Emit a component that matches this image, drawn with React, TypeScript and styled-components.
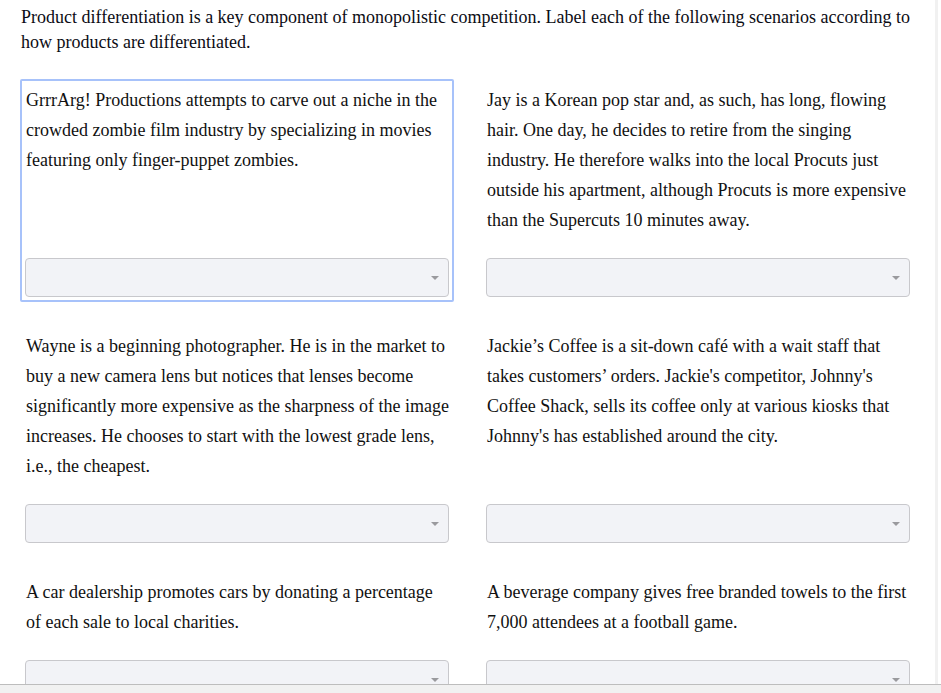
import React from "react";
import styled, { createGlobalStyle } from "styled-components";

const Global = createGlobalStyle`
  html, body { margin: 0; padding: 0; overflow: hidden; background: #fff; }
  body { font-family: "Liberation Serif", "Times New Roman", serif; color: #111; }
`;

const Page = styled.div`
  width: 938px;
  min-height: 693px;
  box-sizing: border-box;
  padding: 5px 22px 40px 20px;
  border-right: 3px solid #f1f1f1;
`;

const Prompt = styled.p`
  margin: 0 0 24px 1px;
  font-size: 18px;
  line-height: 25px;
  color: #0c0c14;
`;

const Grid = styled.div`
  display: grid;
  grid-template-columns: 434px 434px;
  column-gap: 27px;
  row-gap: 23px;
`;

const Card = styled.div<{ $focused?: boolean }>`
  display: flex;
  flex-direction: column;
  border: 2px solid ${(p) => (p.$focused ? "#a7c2fa" : "transparent")};
  border-radius: 2px;
  padding: 4px 3px 3px 3px;
`;

const Scenario = styled.div`
  flex: 1;
  font-size: 18px;
  line-height: 30px;
  color: #111;
  padding-left: 1px;
`;

const Select = styled.div`
  margin-top: 23px;
  height: 37px;
  border: 1px solid #c8c8cc;
  border-radius: 4px;
  background: #f2f3f7;
  display: flex;
  align-items: center;
  justify-content: flex-end;
  padding-right: 9px;
`;

const Caret = styled.span`
  width: 0;
  height: 0;
  border-left: 4px solid transparent;
  border-right: 4px solid transparent;
  border-top: 4px solid #9a9a9e;
`;

const BottomBar = styled.div`
  position: fixed;
  left: 0;
  right: 0;
  bottom: 0;
  height: 8px;
  background: #f1f1f1;
  border-top: 1px solid #bdbdbd;
`;

const scenarios = [
  "GrrrArg! Productions attempts to carve out a niche in the crowded zombie film industry by specializing in movies featuring only finger-puppet zombies.",
  "Jay is a Korean pop star and, as such, has long, flowing hair. One day, he decides to retire from the singing industry. He therefore walks into the local Procuts just outside his apartment, although Procuts is more expensive than the Supercuts 10 minutes away.",
  "Wayne is a beginning photographer. He is in the market to buy a new camera lens but notices that lenses become significantly more expensive as the sharpness of the image increases. He chooses to start with the lowest grade lens, i.e., the cheapest.",
  "Jackie\u2019s Coffee is a sit-down caf\u00e9 with a wait staff that takes customers\u2019 orders. Jackie's competitor, Johnny's Coffee Shack, sells its coffee only at various kiosks that Johnny's has established around the city.",
  "A car dealership promotes cars by donating a percentage of each sale to local charities.",
  "A beverage company gives free branded towels to the first 7,000 attendees at a football game.",
];

export default function App() {
  return (
    <>
      <Global />
      <Page>
        <Prompt>
          Product differentiation is a key component of monopolistic competition. Label each of the following
          scenarios according to how products are differentiated.
        </Prompt>
        <Grid>
          {scenarios.map((s, i) => (
            <Card key={i} $focused={i === 0}>
              <Scenario>{s}</Scenario>
              <Select>
                <Caret />
              </Select>
            </Card>
          ))}
        </Grid>
      </Page>
      <BottomBar />
    </>
  );
}
